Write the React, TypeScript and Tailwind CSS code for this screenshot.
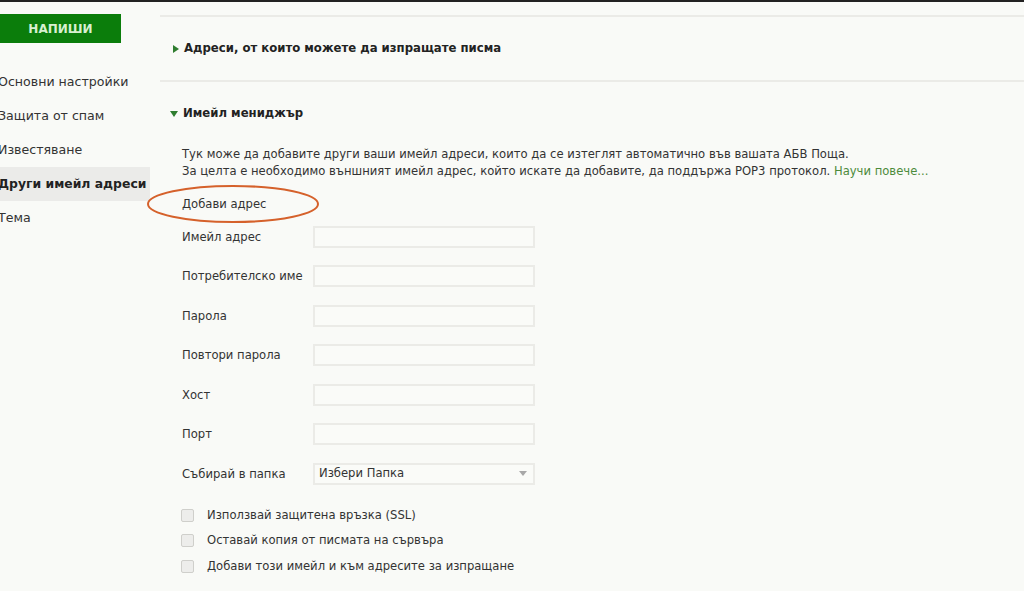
import React from 'react';

const font = { fontFamily: '"DejaVu Sans", Verdana, sans-serif' };

const navItems = ['Основни настройки', 'Защита от спам', 'Известяване', 'Други имейл адреси', 'Тема'];

const fields = ['Имейл адрес', 'Потребителско име', 'Парола', 'Повтори парола', 'Хост', 'Порт'];

const checks = [
  'Използвай защитена връзка (SSL)',
  'Оставай копия от писмата на сървъра',
  'Добави този имейл и към адресите за изпращане',
];

function TriangleRight() {
  return (
    <svg width="6" height="8" viewBox="0 0 6 8" className="mr-[5px] shrink-0">
      <path d="M0 0 L6 4 L0 8 Z" fill="#2f7d2f" />
    </svg>
  );
}

function TriangleDown() {
  return (
    <svg width="8" height="6" viewBox="0 0 8 6" className="mr-[5px] shrink-0">
      <path d="M0 0 L8 0 L4 6 Z" fill="#2f7d2f" />
    </svg>
  );
}

export default function App() {
  return (
    <div className="w-[1024px] h-[591px] overflow-hidden bg-[#f9faf7] text-[#333]" style={font}>
      <div className="h-[2px] bg-[#222]" />
      <div className="flex">
        {/* Sidebar */}
        <div className="w-[160px] shrink-0">
          <div className="mt-[12px] h-[29px] w-[121px] bg-[#0b7d0b] flex items-center justify-center text-[12px] font-bold text-[#d8f0d0]">
            НАПИШИ
          </div>
          <div className="mt-[22px]">
            {navItems.map((item) => (
              <div
                key={item}
                className={
                  item === 'Други имейл адреси'
                    ? 'h-[34px] w-[150px] flex items-center bg-[#ebebe9] font-bold text-[12.4px] text-[#222]'
                    : 'h-[34px] flex items-center text-[12.6px] text-[#333]'
                }
              >
                <span className="-ml-[2px]">{item}</span>
              </div>
            ))}
          </div>
        </div>

        {/* Content */}
        <div className="flex-1 mt-[13px]">
          <div className="border-t-2 border-[#ebebe7]">
            <div className="h-[63px] flex items-center pl-[13px] text-[11.7px] font-bold text-[#222]">
              <TriangleRight />
              Адреси, от които можете да изпращате писма
            </div>
          </div>
          <div className="border-t-2 border-[#ebebe7] pl-[10px]">
            <div className="mt-[23px] flex items-center text-[11.7px] font-bold text-[#222]">
              <TriangleDown />
              Имейл мениджър
            </div>
            <div className="mt-[23px] pl-[12px] text-[11.6px] leading-[17px] text-[#333]">
              <p>Тук може да добавите други ваши имейл адреси, които да се изтеглят автоматично във вашата АБВ Поща.</p>
              <p>
                За целта е необходимо външният имейл адрес, който искате да добавите, да поддържа POP3 протокол.{' '}
                <span className="text-[#4d8b3c]">Научи повече...</span>
              </p>
            </div>
            <div className="relative mt-[15px] pl-[12px] h-[20px] flex items-center text-[11.6px] text-[#333]">
              Добави адрес
              <svg
                width="176"
                height="40"
                viewBox="0 0 176 40"
                className="absolute left-[-25px] top-[-11px] pointer-events-none"
              >
                <ellipse cx="88" cy="20" rx="85" ry="18" fill="none" stroke="#d5612b" strokeWidth="2" />
              </svg>
            </div>

            <div className="pl-[12px] mt-[11px]">
              {fields.map((f) => (
                <div key={f} className="h-[39.5px] flex items-start">
                  <div className="w-[131px] text-[11.6px] leading-[22px] text-[#333]">{f}</div>
                  <div className="w-[222px] h-[22px] border-2 border-[#ebebe7] bg-[#fafbf8]" />
                </div>
              ))}
              <div className="h-[39px] flex items-start">
                <div className="w-[131px] text-[11.6px] leading-[22px] text-[#333]">Събирай в папка</div>
                <div className="w-[222px] h-[22px] border-2 border-[#ebebe7] bg-[#fafbf8] flex items-center justify-between pl-[4px] pr-[6px]">
                  <span className="text-[11.6px] text-[#333]">Избери Папка</span>
                  <svg width="8" height="5" viewBox="0 0 8 5">
                    <path d="M0 0 L8 0 L4 5 Z" fill="#a8a8a8" />
                  </svg>
                </div>
              </div>
            </div>

            <div className="mt-[1px] pl-[11px] flex flex-col">
              {checks.map((c) => (
                <div key={c} className="h-[25.5px] flex items-center">
                  <div className="w-[13px] h-[13px] rounded-[2px] border border-[#cfcfcb] bg-[#ededeb] mr-[13px]" />
                  <span className="text-[11.6px] text-[#333]">{c}</span>
                </div>
              ))}
            </div>
          </div>
        </div>
      </div>
    </div>
  );
}
